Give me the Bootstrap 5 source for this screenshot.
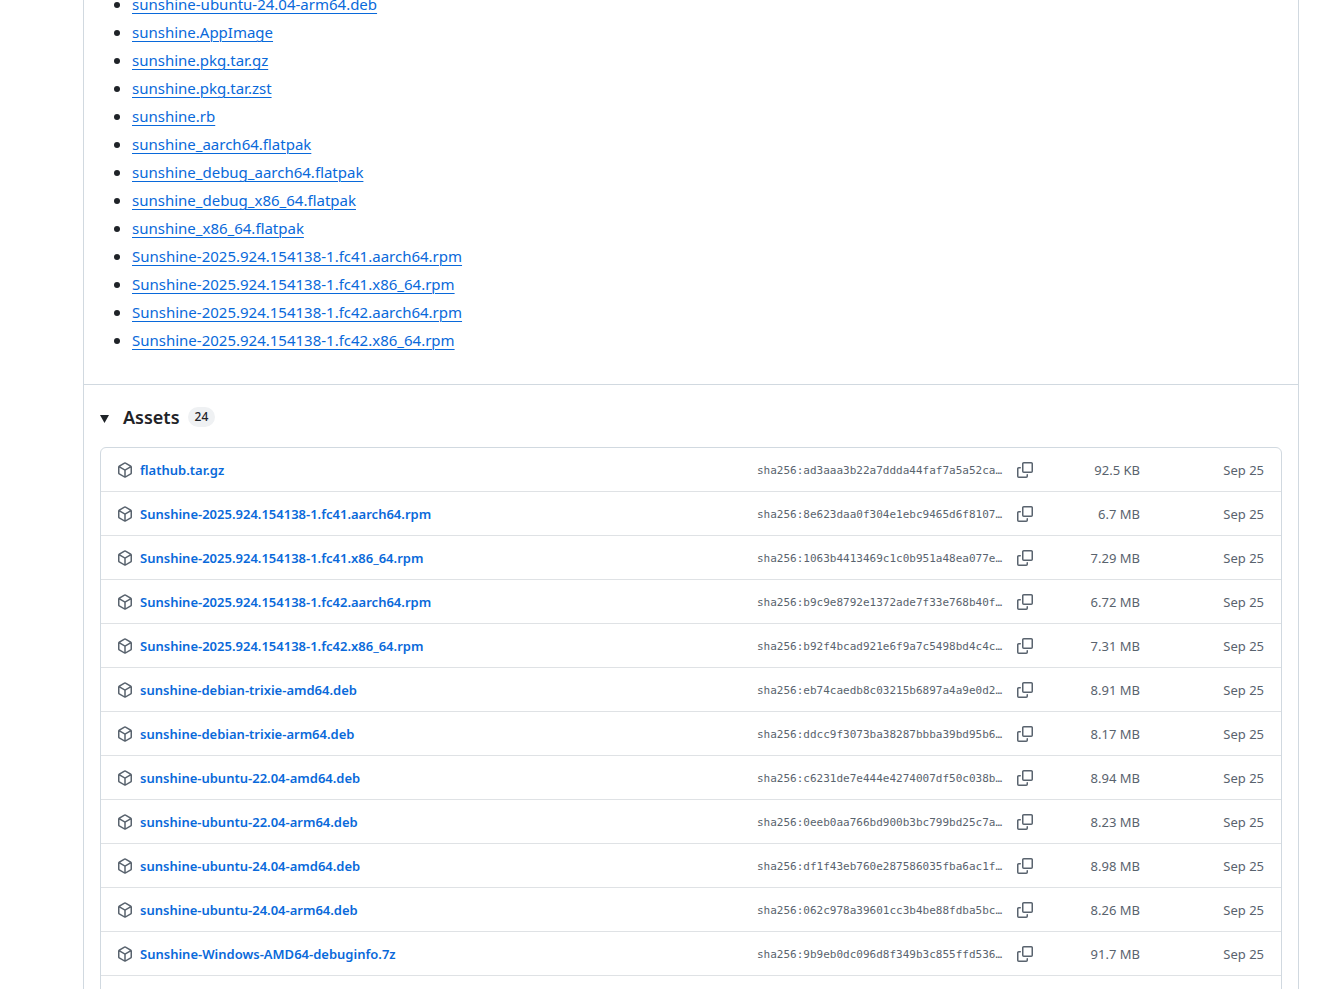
<!DOCTYPE html>
<html lang="en">
<head>
<meta charset="utf-8">
<meta name="viewport" content="width=device-width, initial-scale=1">
<title>Release assets</title>
<link href="https://cdn.jsdelivr.net/npm/bootstrap@5.3.0/dist/css/bootstrap.min.css" rel="stylesheet">
<script src="https://cdn.jsdelivr.net/npm/bootstrap@5.3.0/dist/js/bootstrap.bundle.min.js"></script>
<style>
  body { font-family: "Noto Sans", "Open Sans", sans-serif; font-size: 15px; line-height: 24px; color: #1f2328; background: #fff; }
  a { color: #0969da; }
  .page-shell { height: 100vh; overflow: hidden; padding-left: 83px; padding-right: 45px; }
  .release-box { border: 1px solid #d1d9e0; border-top: 0; border-bottom: 0; }
  .release-notes { margin-top: -8px; padding: 0 16px 32px; border-bottom: 1px solid #d1d9e0; }
  .release-notes ul { padding-left: 32px; font-size: 16px; }
  .release-notes li { height: 24px; }
  .release-notes li + li { margin-top: 4px; }
  .release-notes a { font-size: 15px; text-decoration: underline; text-underline-offset: 3px; text-decoration-thickness: 1px; }
  .assets-summary { list-style: none; height: 32px; }
  .assets-summary::-webkit-details-marker { display: none; }
  .assets-title { font-size: 18px; font-weight: 600; line-height: 32px; margin: 0 8px 0 14px; }
  .count-pill { background: #eff1f3; color: #1f2328; font-size: 12px; font-weight: 500; line-height: 20px; padding: 0 7px; }
  .asset-frame { margin-top: 14px; border: 1px solid #d1d9e0; border-radius: 6px; }
  .asset-table { table-layout: fixed; font-size: 13px; line-height: 20px; }
  .asset-table td { height: 44px; padding: 2px 0 0; vertical-align: middle; color: #59636e; background: none; border-bottom: 0; border-top: 1px solid #dfe2e5; }
  .asset-table tr:first-child td { height: 43px; border-top: 0; }
  .asset-table a { color: #0969da; font-weight: 600; text-decoration: none; }
  .asset-table svg { width: 16px; height: 16px; fill: #59636e; flex: none; }
  .asset-table .date-cell { padding-right: 17px; }
  .asset-name { gap: 7px; }
  .asset-digest { gap: 15px; }
  .col-digest { width: 283px; }
  .col-size { width: 100px; }
  .col-date { width: 141px; }
  .digest { font-family: "DejaVu Sans Mono", monospace; font-size: 11px; padding-top: 1px; }
  .copy-btn { line-height: 0; }
</style>
</head>
<body>
<svg class="d-none" aria-hidden="true">
  <symbol id="package" viewBox="0 0 16 16"><path d="m8.878.392 5.25 3.045c.54.314.872.89.872 1.514v6.098a1.75 1.75 0 0 1-.872 1.514l-5.25 3.045a1.75 1.75 0 0 1-1.756 0l-5.25-3.045A1.75 1.75 0 0 1 1 11.049V4.951c0-.624.332-1.201.872-1.514L7.122.392a1.75 1.75 0 0 1 1.756 0ZM7.875 1.69l-4.63 2.685L8 7.133l4.755-2.758-4.63-2.685a.248.248 0 0 0-.25 0ZM2.5 5.677v5.372c0 .09.047.171.125.216l4.625 2.683V8.432Zm6.25 8.271 4.625-2.683a.25.25 0 0 0 .125-.216V5.677L8.75 8.432Z"/></symbol>
  <symbol id="copy" viewBox="0 0 16 16"><path d="M0 6.75C0 5.784.784 5 1.75 5h1.5a.75.75 0 0 1 0 1.5h-1.5a.25.25 0 0 0-.25.25v7.5c0 .138.112.25.25.25h7.5a.25.25 0 0 0 .25-.25v-1.5a.75.75 0 0 1 1.5 0v1.5A1.75 1.75 0 0 1 9.25 16h-7.5A1.75 1.75 0 0 1 0 14.25Z"/><path d="M5 1.75C5 .784 5.784 0 6.75 0h7.5C15.216 0 16 .784 16 1.75v7.5A1.75 1.75 0 0 1 14.25 11h-7.5A1.75 1.75 0 0 1 5 9.25Zm1.75-.25a.25.25 0 0 0-.25.25v7.5c0 .138.112.25.25.25h7.5a.25.25 0 0 0 .25-.25v-7.5a.25.25 0 0 0-.25-.25Z"/></symbol>
</svg>
<main class="page-shell d-flex flex-column">
  <div class="release-box flex-grow-1 d-flex flex-column">
    <section class="release-notes">
      <ul class="mb-0">
        <li><a href="#">sunshine-ubuntu-24.04-arm64.deb</a></li>
        <li><a href="#">sunshine.AppImage</a></li>
        <li><a href="#">sunshine.pkg.tar.gz</a></li>
        <li><a href="#">sunshine.pkg.tar.zst</a></li>
        <li><a href="#">sunshine.rb</a></li>
        <li><a href="#">sunshine_aarch64.flatpak</a></li>
        <li><a href="#">sunshine_debug_aarch64.flatpak</a></li>
        <li><a href="#">sunshine_debug_x86_64.flatpak</a></li>
        <li><a href="#">sunshine_x86_64.flatpak</a></li>
        <li><a href="#">Sunshine-2025.924.154138-1.fc41.aarch64.rpm</a></li>
        <li><a href="#">Sunshine-2025.924.154138-1.fc41.x86_64.rpm</a></li>
        <li><a href="#">Sunshine-2025.924.154138-1.fc42.aarch64.rpm</a></li>
        <li><a href="#">Sunshine-2025.924.154138-1.fc42.x86_64.rpm</a></li>
      </ul>
    </section>
    <details open class="flex-grow-1 px-3 pt-3">
      <summary class="assets-summary d-flex align-items-center">
        <svg width="9" height="10" viewBox="0 0 9 10" class="mt-1" aria-hidden="true"><path d="M0 1h9L4.500 9z" fill="#1f2328"/></svg>
        <span class="assets-title">Assets</span>
        <span class="count-pill rounded-pill">24</span>
      </summary>
      <div class="asset-frame">
        <table class="table asset-table mb-0">
          <colgroup><col><col class="col-digest"><col class="col-size"><col class="col-date"></colgroup>
          <tbody id="assets"></tbody>
        </table>
      </div>
    </details>
  </div>
</main>
<script>
  const assets = [
    ["flathub.tar.gz", "ad3aaa3b22a7ddda44faf7a5a52ca", "92.5 KB"],
    ["Sunshine-2025.924.154138-1.fc41.aarch64.rpm", "8e623daa0f304e1ebc9465d6f8107", "6.7 MB"],
    ["Sunshine-2025.924.154138-1.fc41.x86_64.rpm", "1063b4413469c1c0b951a48ea077e", "7.29 MB"],
    ["Sunshine-2025.924.154138-1.fc42.aarch64.rpm", "b9c9e8792e1372ade7f33e768b40f", "6.72 MB"],
    ["Sunshine-2025.924.154138-1.fc42.x86_64.rpm", "b92f4bcad921e6f9a7c5498bd4c4c", "7.31 MB"],
    ["sunshine-debian-trixie-amd64.deb", "eb74caedb8c03215b6897a4a9e0d2", "8.91 MB"],
    ["sunshine-debian-trixie-arm64.deb", "ddcc9f3073ba38287bbba39bd95b6", "8.17 MB"],
    ["sunshine-ubuntu-22.04-amd64.deb", "c6231de7e444e4274007df50c038b", "8.94 MB"],
    ["sunshine-ubuntu-22.04-arm64.deb", "0eeb0aa766bd900b3bc799bd25c7a", "8.23 MB"],
    ["sunshine-ubuntu-24.04-amd64.deb", "df1f43eb760e287586035fba6ac1f", "8.98 MB"],
    ["sunshine-ubuntu-24.04-arm64.deb", "062c978a39601cc3b4be88fdba5bc", "8.26 MB"],
    ["Sunshine-Windows-AMD64-debuginfo.7z", "9b9eb0dc096d8f349b3c855ffd536", "91.7 MB"]
  ];
  document.getElementById("assets").innerHTML = assets.map(([name, sha, size]) => `
    <tr>
      <td><div class="asset-name d-flex align-items-center ps-3"><svg aria-hidden="true"><use href="#package"/></svg><a href="#">${name}</a></div></td>
      <td><div class="asset-digest d-flex align-items-center"><span class="digest">sha256:${sha}…</span><button type="button" class="btn p-0 border-0 copy-btn" aria-label="Copy digest of ${name}"><svg aria-hidden="true"><use href="#copy"/></svg></button></div></td>
      <td class="text-end">${size}</td>
      <td class="date-cell text-end">Sep 25</td>
    </tr>`).join("") + '<tr><td colspan="4"></td></tr>';
</script>
</body>
</html>
